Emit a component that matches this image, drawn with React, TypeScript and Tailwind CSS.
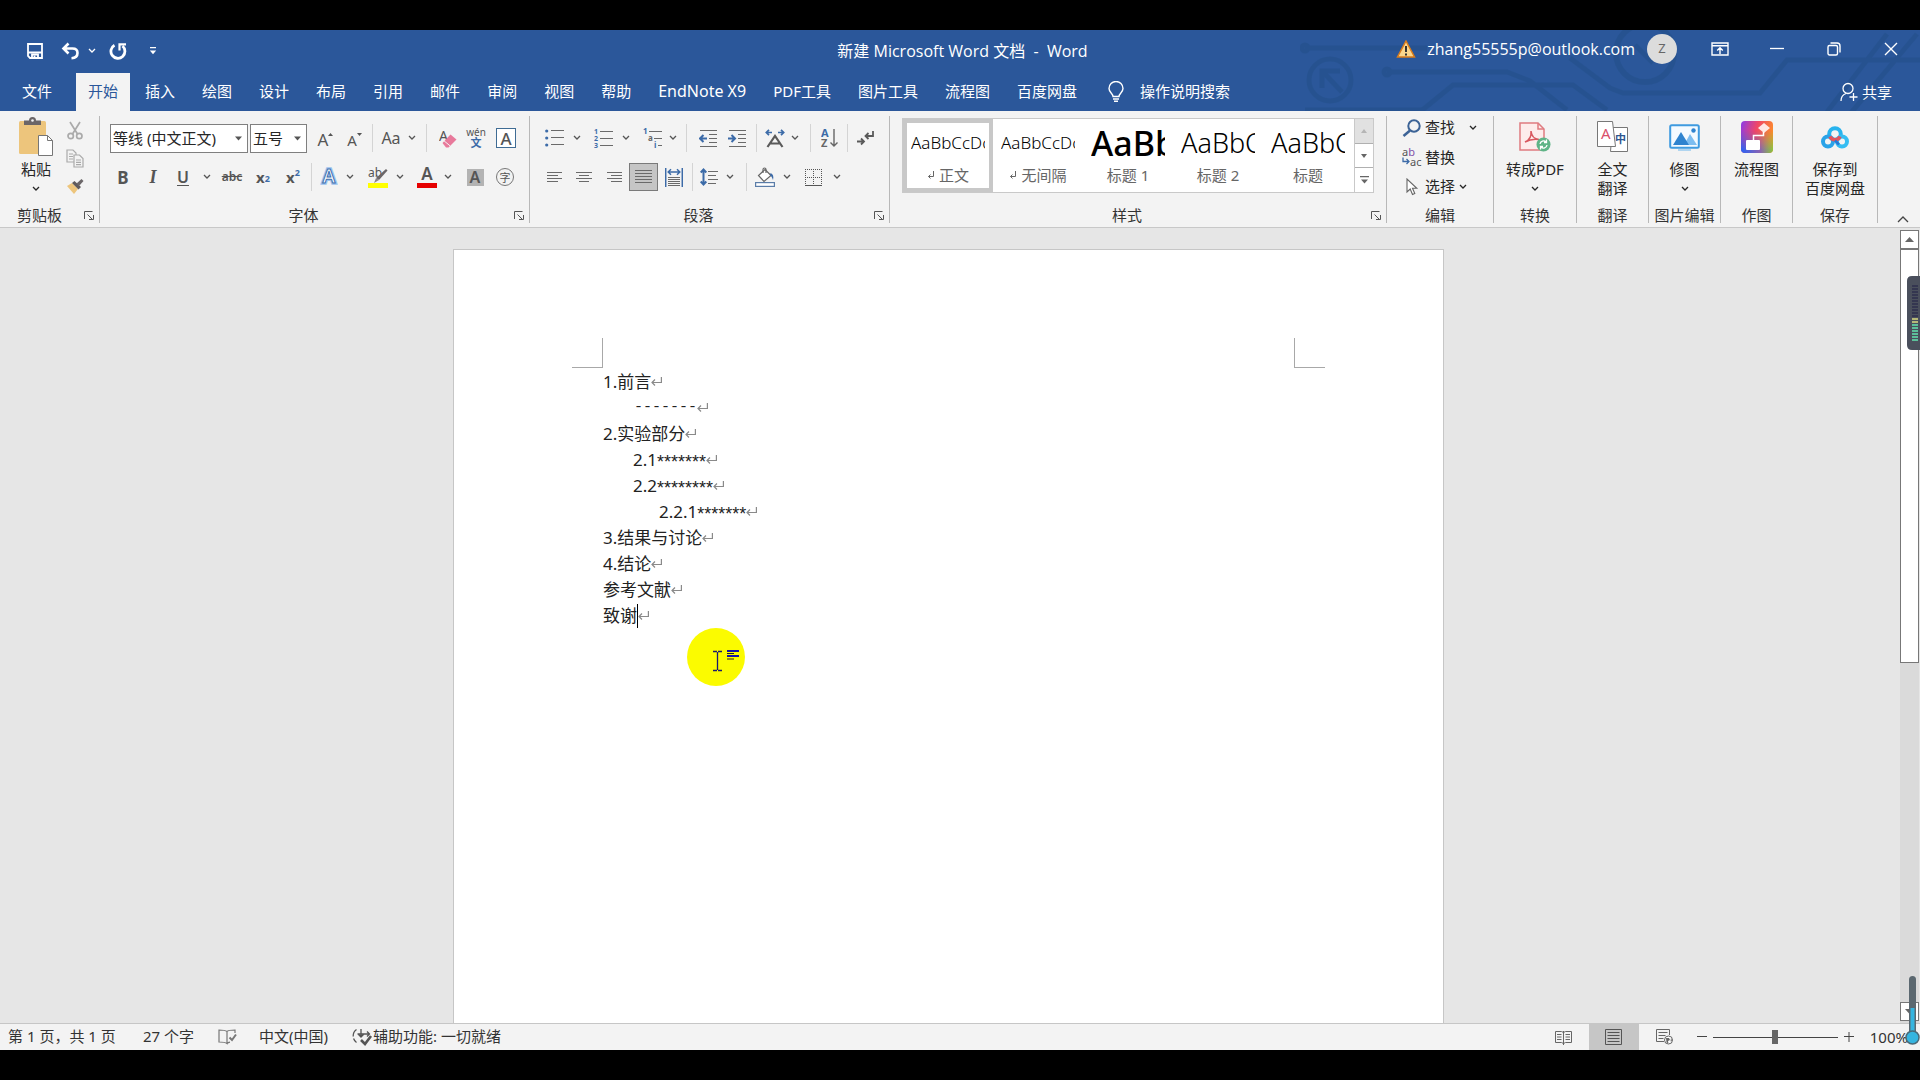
import type { ReactNode } from "react";
import clsx from "clsx";

interface BoxProps {
  children?: ReactNode;
  className?: string;
}

interface ToolProps extends BoxProps {
  label: string;
}

const tabs = ["插入", "绘图", "设计", "布局", "引用", "邮件", "审阅", "视图", "帮助", "EndNote X9", "PDF工具", "图片工具", "流程图", "百度网盘"];

const styles = [
  { name: "正文", sample: "AaBbCcDc", mark: true, size: "text-[17px] font-light" },
  { name: "无间隔", sample: "AaBbCcDc", mark: true, size: "text-[17px] font-light" },
  { name: "标题 1", sample: "AaBb", mark: false, size: "text-[34px] font-medium" },
  { name: "标题 2", sample: "AaBbC", mark: false, size: "text-[27px] font-light" },
  { name: "标题", sample: "AaBbC", mark: false, size: "text-[27px] font-light" },
];

const lines = [
  { text: "1.前言", indent: "" },
  { text: "", dashes: "-------", indent: "pl-[31px]" },
  { text: "2.实验部分", indent: "" },
  { text: "2.1", stars: "*******", indent: "pl-[30px]" },
  { text: "2.2", stars: "********", indent: "pl-[30px]" },
  { text: "2.2.1", stars: "*******", indent: "pl-14" },
  { text: "3.结果与讨论", indent: "" },
  { text: "4.结论", indent: "" },
  { text: "参考文献", indent: "" },
  { text: "致谢", indent: "", caret: true },
];

const Chevron = () => (
  <svg width="8" height="6" viewBox="0 0 8 6" fill="none" stroke="currentColor" strokeWidth="1.3">
    <path d="M1 1l3 3 3-3" />
  </svg>
);

const Tool = ({ label, children, className }: ToolProps) => (
  <button type="button" aria-label={label} className={clsx("flex h-7 shrink-0 items-center justify-center leading-none", className)}>
    {children}
  </button>
);

const Drop = ({ className }: { className: string }) => (
  <Tool label="更多选项" className={className}><Chevron /></Tool>
);

const Sep = ({ className }: { className: string }) => (
  <span className={clsx("flex h-7 shrink-0 justify-center", className)}><i className="w-px bg-[#d4d4d4]" /></span>
);

const Row = ({ children, className }: BoxProps) => (
  <div className={clsx("flex items-center", className)}>{children}</div>
);

const Launcher = () => (
  <button type="button" aria-label="对话框启动器" className="absolute right-1 bottom-0.5">
    <svg width="11" height="11" viewBox="0 0 11 11" fill="none" stroke="#555" strokeWidth="1">
      <path d="M.5 9V1.500h8M3.500 4.500l5 5M9.500 5v4.500H5" />
    </svg>
  </button>
);

const Group = ({ title, children, className, launcher }: BoxProps & { title: string; launcher?: boolean }) => (
  <section className={clsx("relative flex h-[107px] shrink-0 flex-col justify-between border-r border-[#b8b8b8]", className)}>
    <div>{children}</div>
    <h2 className="text-center text-[15px] leading-4 text-[#333]">{title}</h2>
    {launcher && <Launcher />}
  </section>
);

interface BigProps {
  icon: ReactNode;
  first: string;
  second?: string;
}

const BigButton = ({ icon, first, second }: BigProps) => (
  <button type="button" className="flex w-full flex-col items-center text-[15px] leading-[19px] whitespace-nowrap text-[#262626]">
    <span className="flex h-11 items-center justify-center pb-0.5">{icon}</span>
    <span>{first}</span>
    <span className="flex h-[19px] items-center">{second === "v" ? <Chevron /> : second}</span>
  </button>
);

const Circuit = () => (
  <svg className="absolute top-0 right-0" width="620" height="81" viewBox="0 0 620 81" fill="none" stroke="#234f88" strokeWidth="5" opacity="0.5">
    <path d="M5 18h122M87 42h120l23 9 37 29M120 82l33-27h120l34 25M270 28l40 30 13 5h137l27-33h133M587 4l-60 78M617 4l-67 80" />
    <circle cx="5" cy="18" r="3" />
    <circle cx="87" cy="42" r="3" />
    <circle cx="30" cy="50" r="21" />
    <circle cx="345" cy="23" r="29" strokeWidth="6" />
    <path d="M42 62L23 42M22 58V41h18" />
    <path d="M5 80h120M335 15l18 18" />
  </svg>
);

const TitleBar = () => (
  <div className="relative flex h-[43px] items-center pb-0.5 text-white">
    <div className="flex flex-1 items-center pl-[27px]">
      <button type="button" aria-label="保存">
        <svg width="16" height="16" viewBox="0 0 16 16" fill="none" stroke="currentColor" strokeWidth="1.800">
          <path d="M1 1h14v14H3l-2-2zM1 9.500h14" />
          <path d="M5 15v-3.500h6V15" />
          <path d="M7.500 12.500v2.500" />
        </svg>
      </button>
      <button type="button" aria-label="撤消" className="ml-[18px]">
        <svg width="19" height="18" viewBox="0 0 19 18" fill="none" stroke="currentColor" strokeWidth="2.600">
          <path d="M7.500 1.500L2.500 6.500l5 5M3 6.500h8.500c3 0 5 1.800 5 4.500 0 3-2.200 5-6 5.200" />
        </svg>
      </button>
      <button type="button" aria-label="撤消列表" className="ml-2"><Chevron /></button>
      <button type="button" aria-label="重复" className="ml-[13px]">
        <svg width="18" height="18" viewBox="0 0 18 18" fill="none" stroke="currentColor" strokeWidth="2.800">
          <path d="M5.500 3.200A7 7 0 1 0 13.500 4" />
          <path d="M10.500 8.500V2.300h6.500" strokeWidth="2.200" />
        </svg>
      </button>
      <button type="button" aria-label="自定义快速访问工具栏" className="ml-[22px]">
        <svg width="8" height="8" viewBox="0 0 8 8" fill="currentColor"><path d="M1 0h6v1.300H1zM.8 3.500h6.400L4 7.200z" /></svg>
      </button>
    </div>
    <h1 className="font-['Open_Sans','Noto_Sans_CJK_SC',sans-serif] text-[16px] whitespace-pre">新建 Microsoft Word 文档  -  Word</h1>
    <div className="flex flex-1 items-center justify-end pr-[22px] pb-1">
      <svg width="20" height="18" viewBox="0 0 20 18">
        <path d="M10 1l8.500 16h-17z" fill="#fbd68c" stroke="#d97c1c" strokeWidth="1.500" />
        <path d="M10 6v6M10 13.500v2" stroke="#333" strokeWidth="2" />
      </svg>
      <span className="ml-[11px] font-['Open_Sans',sans-serif] text-[16px]">zhang55555p@outlook.com</span>
      <span className="ml-3 flex h-[30px] w-[30px] items-center justify-center rounded-full bg-[#dcdcdc] text-[13px] text-[#666]">Z</span>
      <button type="button" aria-label="功能区显示选项" className="ml-[34px]">
        <svg width="18" height="14" viewBox="0 0 18 14" fill="none" stroke="currentColor" strokeWidth="1.400">
          <path d="M1 1h16v12H1zM1 3.700h16M9 12V6M6.200 8.500L9 5.700l2.800 2.800" />
        </svg>
      </button>
      <button type="button" aria-label="最小化" className="ml-[41px]">
        <svg width="14" height="14" viewBox="0 0 14 14" stroke="currentColor" strokeWidth="1.300"><path d="M0 6.500h14" /></svg>
      </button>
      <button type="button" aria-label="还原" className="ml-[43px]">
        <svg width="14" height="14" viewBox="0 0 14 14" fill="none" stroke="currentColor" strokeWidth="1.400">
          <rect x="1" y="3.500" width="9.500" height="9.500" rx="1.500" />
          <path d="M3.500 1h6.500q3 0 3 3v6.500" />
        </svg>
      </button>
      <button type="button" aria-label="关闭" className="ml-[43px]">
        <svg width="14" height="14" viewBox="0 0 14 14" stroke="currentColor" strokeWidth="1.400"><path d="M1 1l12 12M13 1L1 13" /></svg>
      </button>
    </div>
  </div>
);

const TabBar = () => (
  <nav className="relative flex h-[38px] items-stretch gap-[3px] text-[15px] whitespace-nowrap text-white">
    <button type="button" className="ml-2.5 px-3 pb-0.5">文件</button>
    <button type="button" className="ml-[9px] bg-[#f3f3f3] px-3 pb-0.5 text-[#2b579a]">开始</button>
    {tabs.map((tab) => (
      <button type="button" key={tab} className={clsx("px-3 pb-0.5", tab === "EndNote X9" && "text-[16px]")}>{tab}</button>
    ))}
    <button type="button" className="ml-4 flex items-center gap-4 pb-0.5">
      <svg width="16" height="21" viewBox="0 0 16 21" fill="none" stroke="currentColor" strokeWidth="1.400">
        <path d="M5 15.500c0-3-4-4.300-4-8a7 7 0 0 1 14 0c0 3.700-4 5-4 8zM5 18h6M6 20.200h4" />
      </svg>
      操作说明搜索
    </button>
    <button type="button" className="mr-7 ml-auto flex items-center gap-1">
      <svg width="18" height="20" viewBox="0 0 18 20" fill="none" stroke="currentColor" strokeWidth="1.300">
        <circle cx="8" cy="6.500" r="5" />
        <path d="M1 19c0-4 2-6.500 5-7.500M13.500 11v8M9.500 15h8" />
      </svg>
      共享
    </button>
  </nav>
);

const Clipboard = () => (
  <Group title="剪贴板" launcher className="w-[100px] [&>h2]:pr-5">
    <div className="flex pl-4">
      <div className="w-10">
        <BigButton
          first="粘贴"
          second="v"
          icon={
            <svg width="36" height="40" viewBox="0 0 36 40">
              <rect x="1" y="4" width="27" height="33" rx="1.500" fill="#edc57c" />
              <path d="M6 8V3.500h5a3.500 3.500 0 0 1 7 0h5V8z" fill="#6b6668" />
              <circle cx="14.500" cy="3.500" r="1.300" fill="#f3f3f3" />
              <path d="M20.500 18.500h9l5 5v15h-14z" fill="#fff" stroke="#767676" />
              <path d="M29.500 18.500v5h5" fill="none" stroke="#767676" />
            </svg>
          }
        />
      </div>
      <div className="flex w-[37px] flex-col items-center">
        <Tool label="剪切">
          <svg width="16" height="19" viewBox="0 0 16 19" fill="none" stroke="#aaa" strokeWidth="1.700">
            <path d="M3 1l7.500 12M13 1L5.500 13" />
            <circle cx="3.700" cy="15" r="2.700" />
            <circle cx="12.300" cy="15" r="2.700" />
          </svg>
        </Tool>
        <Tool label="复制">
          <svg width="18" height="19" viewBox="0 0 18 19" fill="#f3f3f3" stroke="#aaa" strokeWidth="1.200">
            <path d="M1 1h6l3 3v9H1zM3 5h4M3 7.500h4M3 10h4" />
            <path d="M8 6h5.500L17 9.500V18H8zM10 11h5M10 13.300h5M10 15.600h5" />
          </svg>
        </Tool>
        <Tool label="格式刷">
          <svg width="18" height="16" viewBox="0 0 18 16">
            <path d="M1 8l5-3 6 6-4 5z" fill="#edc57c" />
            <path d="M6 5l2.500-2 6.500 6-2.500 2.500z" fill="#5f5a5c" />
            <path d="M10.500 5.500L15.500 1l2 2-4.500 5z" fill="#6b6668" />
          </svg>
        </Tool>
      </div>
    </div>
  </Group>
);

const Combo = ({ label, value, className }: { label: string; value: string; className: string }) => (
  <span className={clsx("relative flex h-[29px] shrink-0", className)}>
    <select aria-label={label} className="w-full appearance-none border border-[#7f7f7f] bg-white pl-0.5 text-[15px] text-[#262626]">
      <option>{value}</option>
    </select>
    <svg className="pointer-events-none absolute top-3 right-1.5" width="7" height="5" viewBox="0 0 7 5" fill="#555"><path d="M0 .5h7L3.500 4.500z" /></svg>
  </span>
);

const FontGroup = () => (
  <Group title="字体" launcher className="w-[430px] [&>h2]:pr-[22px]">
    <Row className="h-11 pl-2.5">
      <Combo label="字体" value="等线 (中文正文)" className="w-[138px]" />
      <Combo label="字号" value="五号" className="ml-0.5 w-[57px]" />
      <Tool label="增大字号" className="ml-1 w-[29px] items-end pb-1 text-[17px]">
        A<svg className="mb-3" width="5" height="3" viewBox="0 0 5 3" fill="currentColor"><path d="M0 3h5L2.500 0z" /></svg>
      </Tool>
      <Tool label="减小字号" className="w-[29px] items-end pb-1 text-[15px]">
        A<svg className="mb-3" width="5" height="3" viewBox="0 0 5 3" fill="currentColor"><path d="M0 0h5L2.500 3z" /></svg>
      </Tool>
      <Sep className="w-1.5" />
      <Tool label="更改大小写" className="w-8 text-[16px]">Aa</Tool>
      <Drop className="w-2.5" />
      <Sep className="w-[18px]" />
      <Tool label="清除所有格式" className="w-[26px]">
        <svg width="18" height="19" viewBox="0 0 18 19">
          <text x="0" y="12" fontSize="14" fill="#555">A</text>
          <path d="M3.500 14L11.500 5.500l6 5-8 8h-2.500z" fill="#e8799b" />
          <path d="M5 11.800l6 5" stroke="#f3f3f3" />
        </svg>
      </Tool>
      <Tool label="拼音指南" className="w-[30px] flex-col">
        <span className="text-[10px] leading-[10px]">wén</span>
        <span className="text-[11px] leading-[12px] font-bold text-[#3c6ba8]">文</span>
      </Tool>
      <Tool label="字符边框" className="w-[30px]">
        <span className="flex h-5 w-5 items-center justify-center border border-[#3f6c94] bg-white text-[17px] font-medium">A</span>
      </Tool>
    </Row>
    <Row className="h-[34px] pl-2">
      <Tool label="加粗" className="w-[30px] text-[17px] font-bold">B</Tool>
      <Tool label="倾斜" className="w-[30px] font-['Liberation_Serif',serif] text-[18px] font-bold italic">I</Tool>
      <Tool label="下划线" className="w-[30px] text-[16px] font-semibold underline underline-offset-2">U</Tool>
      <Drop className="w-[18px]" />
      <Tool label="删除线" className="w-8 text-[12px] font-semibold line-through">abc</Tool>
      <Tool label="下标" className="w-[30px] text-[15px] font-bold">x<sub className="text-[9px] text-[#3c6ba8]">2</sub></Tool>
      <Tool label="上标" className="w-[30px] text-[15px] font-bold">x<sup className="text-[9px] text-[#3c6ba8]">2</sup></Tool>
      <Sep className="w-1.5" />
      <Tool label="文本效果" className="w-[30px]">
        <svg width="18" height="20" viewBox="0 0 18 20">
          <text x="9" y="16" textAnchor="middle" fontSize="19" fontWeight="600" fill="#fff" stroke="#9dc3ee" strokeWidth="3.500">A</text>
          <text x="9" y="16" textAnchor="middle" fontSize="19" fontWeight="600" fill="#fff" stroke="#3f6fae" strokeWidth="1">A</text>
        </svg>
      </Tool>
      <Drop className="w-3" />
      <Tool label="突出显示" className="ml-1.5 w-8">
        <svg width="20" height="21" viewBox="0 0 20 21">
          <text x="0" y="10" fontSize="12" fill="#555">ab</text>
          <path d="M18 2l1.500 1.500L11 13l-3-2z" fill="#6b6668" />
          <path d="M8 11l3 2-5 3z" fill="#8a8587" />
          <rect y="16" width="20" height="5" fill="#ff0" />
        </svg>
      </Tool>
      <Drop className="w-3" />
      <Tool label="字体颜色" className="ml-1.5 w-[30px]">
        <svg width="20" height="21" viewBox="0 0 20 21">
          <text x="10" y="13" textAnchor="middle" fontSize="17" fontWeight="600" fill="#555">A</text>
          <rect y="16" width="20" height="5" fill="#e60000" />
        </svg>
      </Tool>
      <Drop className="w-3" />
      <Tool label="字符底纹" className="ml-1.5 w-[30px]">
        <span className="flex h-[17px] w-[17px] items-center justify-center bg-[#b3b3b3] text-[16px] font-semibold">A</span>
      </Tool>
      <Tool label="带圈字符" className="w-[30px]">
        <span className="flex h-[18px] w-[18px] items-center justify-center rounded-full border border-[#777] text-[11px]">字</span>
      </Tool>
    </Row>
  </Group>
);

// horizontal rules given as [x, y, width] triples
const Rules = ({ rules }: { rules: number[][] }) => (
  <g fill="#6a6a6a" stroke="none">
    {rules.map(([x, y, w]) => <rect key={y} x={x} y={y} width={w} height="1" />)}
  </g>
);

const ParagraphGroup = () => (
  <Group title="段落" launcher className="w-[360px] [&>h2]:pr-[22px]">
    <Row className="h-11 pl-[9px]">
      <Tool label="项目符号" className="w-[30px]">
        <svg width="19" height="18" viewBox="0 0 19 18" fill="#3c6ba8">
          <circle cx="1.700" cy="2" r="1.600" /><circle cx="1.700" cy="9" r="1.600" /><circle cx="1.700" cy="16" r="1.600" />
          <Rules rules={[[6, 1, 13], [6, 8, 13], [6, 15, 13]]} />
        </svg>
      </Tool>
      <Drop className="w-4" />
      <Tool label="编号" className="ml-[3px] w-[30px]">
        <svg width="19" height="20" viewBox="0 0 19 20" fontSize="7" fontWeight="700" fill="#3c6ba8">
          <text x="0" y="6">1</text><text x="0" y="13">2</text><text x="0" y="20">3</text>
          <Rules rules={[[6, 3, 13], [6, 10, 13], [6, 17, 13]]} />
        </svg>
      </Tool>
      <Drop className="w-4" />
      <Tool label="多级列表" className="ml-[3px] w-[30px]">
        <svg width="19" height="20" viewBox="0 0 19 20" fontSize="8" fontWeight="700" fill="#3c6ba8">
          <text x="0" y="6">1</text><text x="5" y="13" fill="#666">a</text><text x="11" y="20">i</text>
          <Rules rules={[[6, 3, 13], [11, 10, 8], [15, 17, 4]]} />
        </svg>
      </Tool>
      <Drop className="w-3" />
      <Sep className="w-3.5" />
      <Tool label="减少缩进量" className="w-[29px]">
        <svg width="18" height="17" viewBox="0 0 18 17" fill="none" stroke="#3c6ba8" strokeWidth="2">
          <path d="M8 8.500H1.500M4.500 5L1 8.500 4.500 12" />
          <Rules rules={[[1, 0, 17], [10, 4, 8], [10, 8, 8], [10, 12, 8], [1, 16, 17]]} />
        </svg>
      </Tool>
      <Tool label="增加缩进量" className="w-[30px]">
        <svg width="18" height="17" viewBox="0 0 18 17" fill="none" stroke="#3c6ba8" strokeWidth="2">
          <path d="M0 8.500h6.500M3.500 5L7 8.500 3.500 12" />
          <Rules rules={[[1, 0, 17], [10, 4, 8], [10, 8, 8], [10, 12, 8], [1, 16, 17]]} />
        </svg>
      </Tool>
      <Sep className="w-2" />
      <Tool label="中文版式" className="w-[30px]">
        <svg width="20" height="19" viewBox="0 0 20 19" fill="none" stroke="#3c6ba8" strokeWidth="1.700">
          <path d="M7 3.500H1.500M4 .8L1.300 3.500 4 6.200M13 3.500h5.500M16 .8l2.700 2.700L16 6.200" />
          <path d="M2.500 18L10 7l7.500 11M5.500 14.500h9" stroke="#5a5a5a" strokeWidth="2.200" />
        </svg>
      </Tool>
      <Drop className="w-2.5" />
      <Sep className="w-5" />
      <Tool label="排序" className="w-5">
        <svg width="18" height="20" viewBox="0 0 18 20" fontSize="11" fontWeight="700" fill="none">
          <text x="0" y="9" fill="#3c6ba8">A</text><text x="0" y="19" fill="#666">Z</text>
          <path d="M13 1v17M9.500 14.500L13 18l3.500-3.500" stroke="#666" strokeWidth="1.400" />
        </svg>
      </Tool>
      <Sep className="w-3.5" />
      <Tool label="显示编辑标记" className="w-[22px]">
        <svg width="17" height="16" viewBox="0 0 17 16" fill="none" stroke="#5a5a5a" strokeWidth="1.800">
          <path d="M16 1v5H9M11.500 3L8.500 6l3 3M0 11.500h7M4 8.500l3 3-3 3" />
        </svg>
      </Tool>
    </Row>
    <Row className="h-[34px] pl-[9px]">
      <Tool label="左对齐" className="w-[30px]">
        <svg width="15" height="13" viewBox="0 0 15 13"><Rules rules={[[0, 1, 15], [0, 4, 11], [0, 7, 15], [0, 10, 11]]} /></svg>
      </Tool>
      <Tool label="居中" className="w-[30px]">
        <svg width="16" height="13" viewBox="0 0 16 13"><Rules rules={[[0, 1, 16], [3, 4, 10], [0, 7, 16], [3, 10, 10]]} /></svg>
      </Tool>
      <Tool label="右对齐" className="w-[30px]">
        <svg width="15" height="13" viewBox="0 0 15 13"><Rules rules={[[0, 1, 15], [4, 4, 11], [0, 7, 15], [4, 10, 11]]} /></svg>
      </Tool>
      <Tool label="两端对齐" className="w-[29px] border border-[#7a7a7a] bg-[#c5c5c5]">
        <svg width="17" height="14" viewBox="0 0 17 14"><Rules rules={[[0, 0, 17], [0, 3, 17], [0, 6, 17], [0, 9, 17], [0, 12, 17]]} /></svg>
      </Tool>
      <Tool label="分散对齐" className="w-[31px]">
        <svg width="18" height="19" viewBox="0 0 18 19" fill="none" stroke="#3c6ba8" strokeWidth="1.500">
          <path d="M.7 0v19M17.300 0v19M3 4h12M6 1.200L3.200 4 6 6.800M12 1.200L14.800 4 12 6.800" />
          <Rules rules={[[3, 9, 12], [3, 11, 12], [3, 13, 12], [3, 15, 12], [3, 17, 12]]} />
        </svg>
      </Tool>
      <Sep className="w-1.5" />
      <Tool label="行和段落间距" className="w-[28px]">
        <svg width="18" height="18" viewBox="0 0 18 18" fill="none" stroke="#3c6ba8" strokeWidth="2">
          <path d="M3.500 2v14M.7 4.500l2.800-3 2.800 3M.7 13.500l2.800 3 2.800-3" />
          <Rules rules={[[8, 3, 10], [8, 7, 8], [8, 11, 10], [8, 15, 8]]} />
        </svg>
      </Tool>
      <Drop className="w-3.5" />
      <Sep className="w-[18px]" />
      <Tool label="底纹" className="w-5">
        <svg width="20" height="20" viewBox="0 0 20 20" fill="none" stroke="#666" strokeWidth="1.200">
          <path d="M10 2.500l6 6-7 6-5.500-6z" fill="#fff" />
          <path d="M8 6V2.500a1.500 1.500 0 0 1 3 0V6" />
          <path d="M15.500 6c2.500 1 3.500 3.500 2.500 7-1-2.500-1.500-4-3-4.500z" fill="#3c6ba8" stroke="none" />
          <rect x=".6" y="15.600" width="18.800" height="3.800" fill="#fff" stroke="#5b7da8" />
        </svg>
      </Tool>
      <Drop className="w-6" />
      <Tool label="边框" className="w-[28px]">
        <svg width="17" height="17" viewBox="0 0 17 17" fill="none" stroke="#555" strokeDasharray="1 1">
          <path d="M0 .5h17M0 8.500h17M.5 0v16M8.500 0v16M16.500 0v16" />
          <path d="M0 16.500h17" strokeDasharray="none" />
        </svg>
      </Tool>
      <Drop className="w-5" />
    </Row>
  </Group>
);

const StylesGroup = () => (
  <Group title="样式" launcher className="w-[497px] [&>h2]:pr-[22px]">
    <div className="mt-0.5 ml-[12px] flex h-[75px] w-[472px] border border-[#c9c9c9] bg-white">
      {styles.map((style, i) => (
        <button
          type="button"
          key={style.name}
          className={clsx("flex w-[90px] shrink-0 flex-col items-center", i === 0 && "outline-4 -outline-offset-4 outline-[#c8c8c8] ring-1 ring-[#8a8a8a] ring-inset")}
        >
          <span className={clsx("flex h-[47px] w-[74px] items-center overflow-hidden leading-none whitespace-nowrap text-black", style.size)}>{style.sample}</span>
          <span className="flex items-center gap-1 text-[15px] leading-[18px] text-[#666]">
            {style.mark && (
              <svg width="8" height="8" viewBox="0 0 8 8" fill="none" stroke="#666"><path d="M6.500 0v5.500h-5M3.500 3.500l-2 2 2 2" /></svg>
            )}
            {style.name}
          </span>
        </button>
      ))}
      <div className="ml-auto flex w-[19px] flex-col border-l border-[#c9c9c9]">
        <button type="button" aria-label="上一行" className="flex flex-1 items-center justify-center bg-[#e1e1e1]">
          <svg width="6" height="4" viewBox="0 0 6 4" fill="#b5b5b5"><path d="M0 4h6L3 0z" /></svg>
        </button>
        <button type="button" aria-label="下一行" className="flex flex-1 items-center justify-center border-y border-[#b0b0b0]">
          <svg width="6" height="4" viewBox="0 0 6 4" fill="#666"><path d="M0 0h6L3 4z" /></svg>
        </button>
        <button type="button" aria-label="其他" className="flex flex-1 items-center justify-center">
          <svg width="9" height="8" viewBox="0 0 9 8" fill="#666"><path d="M0 0h9v1.300H0zM1 3.500h7l-3.500 4z" /></svg>
        </button>
      </div>
    </div>
  </Group>
);

const EditGroup = () => (
  <Group title="编辑" className="w-[107px]">
    <div className="flex flex-col pl-[15px] text-[15px] text-[#262626]">
      <button type="button" className="flex h-[29px] items-center pb-1.5">
        <svg width="19" height="18" viewBox="0 0 19 18" fill="none" stroke="#3c6396" strokeWidth="2">
          <circle cx="12" cy="7" r="5.700" />
          <path d="M8 11.500L1.500 17" strokeWidth="2.500" />
        </svg>
        <span className="mr-3.5 ml-1">查找</span>
        <Chevron />
      </button>
      <button type="button" className="flex h-[29px] items-center pb-1">
        <svg width="20" height="19" viewBox="0 0 20 19" fontSize="11" fill="#555">
          <text x="0" y="8">a<tspan fill="#8050a8">b</tspan></text>
          <text x="8" y="18">ac</text>
          <path d="M1 9.500v4h6M4.500 11l2.500 2.500L4.500 16" fill="none" stroke="#3c6ba8" strokeWidth="1.300" />
        </svg>
        <span className="ml-[3px]">替换</span>
      </button>
      <button type="button" className="flex h-[29px] items-center pb-1">
        <svg width="19" height="18" viewBox="0 0 19 18" fill="#fff" stroke="#666" strokeWidth="1.100">
          <path d="M5 1v13l3.200-3 2.300 5.500 2.300-1L10.500 10.300h4.300z" />
        </svg>
        <span className="mr-1 ml-1">选择</span>
        <Chevron />
      </button>
    </div>
  </Group>
);

const AddinGroups = () => (
  <>
    <Group title="转换" className="w-[83px]">
      <BigButton
        first="转成PDF"
        second="v"
        icon={
          <svg width="32" height="30" viewBox="0 0 32 30" fill="none">
            <path d="M1 1h18l6 6v21H1z" fill="#fdeceb" stroke="#df7b80" strokeWidth="1.500" />
            <path d="M19 1v6h6" stroke="#df7b80" strokeWidth="1.500" />
            <path d="M6 20c5-2 6.500-6 6-11 .5 5 3 8 8 8.500-6-.8-9.500 0-14 2.500z" stroke="#d8585f" strokeWidth="1.500" />
            <circle cx="24.500" cy="22.500" r="7" fill="#5fb487" />
            <path d="M21 22a3.500 3.500 0 0 1 6-2M28 23a3.500 3.500 0 0 1-6 2M27.500 17.500V20.500H25M21.500 27.500V24.500H24" stroke="#fff" strokeWidth="1.300" />
          </svg>
        }
      />
    </Group>
    <Group title="翻译" className="w-[72px]">
      <BigButton
        first="全文"
        second="翻译"
        icon={
          <svg width="32" height="32" viewBox="0 0 32 32" fill="#fff" stroke="#777">
            <path d="M15.500 6.500h15v24h-17z" />
            <path d="M.5.500h15l3 25H.5z" />
            <text x="4" y="18" fontSize="15" fill="#d9506a" stroke="none">A</text>
            <text x="18" y="22" fontSize="11" fontWeight="700" fill="#2f568f" stroke="none">中</text>
          </svg>
        }
      />
    </Group>
    <Group title="图片编辑" className="w-[72px]">
      <BigButton
        first="修图"
        second="v"
        icon={
          <svg width="32" height="27" viewBox="0 0 32 27">
            <rect x="1.200" y="1.200" width="28.600" height="22.600" rx="1.500" fill="#f4faff" stroke="#3f9be0" strokeWidth="2" />
            <path d="M15 21l6-11 7 11z" fill="#7dbdf0" />
            <path d="M4 21l8-13 8 13z" fill="#2f83cf" />
            <circle cx="24.500" cy="6.500" r="2.200" fill="#2f83cf" />
            <path d="M9 26h13" stroke="#8cc4ee" strokeWidth="1.300" />
          </svg>
        }
      />
    </Group>
    <Group title="作图" className="w-[72px]">
      <BigButton
        first="流程图"
        icon={
          <svg width="32" height="32" viewBox="0 0 32 32">
            <defs>
              <linearGradient id="flowWarm" x1="0" y1="0" x2="1" y2="0.3">
                <stop offset="0" stopColor="#8a3bea" />
                <stop offset="0.500" stopColor="#f04668" />
                <stop offset="1" stopColor="#fb8b2c" />
              </linearGradient>
              <linearGradient id="flowCool" x1="0" y1="0" x2="1" y2="0">
                <stop offset="0" stopColor="#2b62f5" />
                <stop offset="0.600" stopColor="#8a63b0" />
                <stop offset="1" stopColor="#8cc63a" />
              </linearGradient>
              <linearGradient id="flowFade" x1="0" y1="0" x2="0" y2="1">
                <stop offset="0.300" stopColor="#000" />
                <stop offset="0.900" stopColor="#fff" />
              </linearGradient>
              <mask id="flowMask"><rect width="32" height="32" fill="url(#flowFade)" /></mask>
            </defs>
            <rect width="32" height="32" rx="4" fill="url(#flowWarm)" />
            <rect width="32" height="32" rx="4" fill="url(#flowCool)" mask="url(#flowMask)" />
            <path d="M23 2l6 5-6 5-6-5z" fill="#fff" fillOpacity="0.850" />
            <path d="M22.500 11v3.500H12.500V19" fill="none" stroke="#fff" strokeWidth="1.500" />
            <rect x="5" y="19" width="14" height="10" rx="1" fill="#fff" />
          </svg>
        }
      />
    </Group>
    <Group title="保存" className="w-[85px]">
      <BigButton
        first="保存到"
        second="百度网盘"
        icon={
          <svg width="28" height="23" viewBox="0 0 28 23" fill="none" strokeWidth="4">
            <circle cx="14" cy="8" r="5.800" stroke="#27b3ee" />
            <circle cx="7" cy="15.500" r="5" stroke="#2aa3e8" />
            <circle cx="21" cy="15.500" r="5" stroke="#35bdf2" />
            <path d="M9 10.500a5.500 5.500 0 0 0 10 0" stroke="#e2535c" strokeWidth="3.500" />
            <path d="M14 14.500l4 4" stroke="#2478d8" strokeWidth="2.500" />
          </svg>
        }
      />
    </Group>
  </>
);

const Ribbon = () => (
  <div className="flex min-h-[117px] border-b border-[#c8c8c8] bg-[#f3f3f3] pt-[5px] text-[#555]">
    <Clipboard />
    <FontGroup />
    <ParagraphGroup />
    <StylesGroup />
    <EditGroup />
    <AddinGroups />
    <button type="button" aria-label="折叠功能区" className="ml-auto self-end pr-[11px] pb-1">
      <svg width="12" height="7" viewBox="0 0 12 7" fill="none" stroke="#444" strokeWidth="1.300"><path d="M1 6l5-5 5 5" /></svg>
    </button>
  </div>
);

const ReturnMark = () => (
  <svg className="mb-0.5" width="11" height="9" viewBox="0 0 11 9" fill="none" stroke="#8a8a8a" strokeWidth="1.200"><path d="M10.400 0v5.500H1M4 2.500l-3 3 3 3" /></svg>
);

const Page = () => (
  <main className="w-[991px] border border-b-0 border-[#c6c6c6] bg-white pt-[88px]">
    <div className="flex justify-between px-[118px]">
      <i className="h-[30px] w-[31px] border-r border-b border-[#a8a8a8]" />
      <i className="h-[30px] w-[31px] border-b border-l border-[#a8a8a8]" />
    </div>
    <div className="px-[149px] pt-px text-[17px] leading-[26px] text-[#222]">
      {lines.map((line, i) => (
        <p key={i} className={clsx("flex h-[26px] items-center", line.indent)}>
          {line.text}
          {line.dashes && <span className="font-['Liberation_Mono',monospace] text-[15px]">{line.dashes}</span>}
          {line.stars && <span className="pt-1 font-['Liberation_Sans',sans-serif] text-[18px]">{line.stars}</span>}
          {line.caret && <i className="h-6 w-px bg-black" />}
          <ReturnMark />
        </p>
      ))}
    </div>
  </main>
);

// mouse highlight of the recorder with the click-and-type cursor
const Pointer = () => (
  <svg className="absolute top-[400px] left-[687px]" width="58" height="58" viewBox="0 0 58 58">
    <circle cx="29" cy="29" r="29" fill="#fbfb00" />
    <path d="M26 23.500h4m1 0h4M30.500 24v18M26 42.500h4m1 0h4" stroke="#1a1a6e" strokeWidth="1.300" />
    <path d="M40 23h12M40 28h12" stroke="#1313a8" strokeWidth="2" />
    <path d="M40 25.500h7M40 31h7" stroke="#222" />
  </svg>
);

const ScrollBar = () => (
  <div className="mt-0.5 mr-px flex w-[19px] shrink-0 flex-col bg-[#dadada]">
    <button type="button" aria-label="向上滚动" className="flex h-[19px] items-center justify-center border border-[#777] bg-white">
      <svg width="9" height="5" viewBox="0 0 9 5" fill="#666"><path d="M0 5h9L4.500 0z" /></svg>
    </button>
    <div className="h-[414px] border border-[#777] bg-white" />
    <button type="button" aria-label="向下滚动" className="mt-auto mb-0.5 flex h-[19px] items-center justify-center border border-[#777] bg-white">
      <svg width="9" height="5" viewBox="0 0 9 5" fill="#666"><path d="M0 0h9L4.500 5z" /></svg>
    </button>
  </div>
);

const ticks = Array.from({ length: 19 }, (_, i) => i);

const AudioMeter = () => (
  <svg className="absolute top-12 right-0" width="13" height="75" viewBox="0 0 13 75">
    <path d="M13 0H5Q0 0 0 5v64q0 5 5 5h8z" fill="#4a4f5c" />
    {ticks.map((i) => (
      <rect key={i} x="5" y={9 + i * 3} width="6" height="2" fill={i < 11 ? "#343650" : i < 13 ? "#b5b878" : "#5cc09a"} />
    ))}
  </svg>
);

const Thermometer = () => (
  <svg className="absolute right-0 -bottom-6" width="16" height="72" viewBox="0 0 16 72">
    <rect x="5" y="1" width="7" height="62" rx="3.500" fill="#5b6870" />
    <rect x="6.500" y="33" width="4" height="26" fill="#35b5e0" />
    <circle cx="8.500" cy="62.500" r="6.500" fill="#35b5e0" stroke="#4a6a78" strokeWidth="1.500" />
  </svg>
);

const StatusBar = () => (
  <footer className="flex h-[27px] items-center border-t border-[#c6c6c6] bg-[#f3f3f3] pl-2 text-[15px] leading-6 whitespace-nowrap text-[#333]">
    <span className="w-[135px] pb-0.5">第 1 页，共 1 页</span>
    <span className="w-[75px] pb-0.5">27 个字</span>
    <svg width="19" height="16" viewBox="0 0 19 16" fill="none" stroke="#777" strokeWidth="1.200">
      <path d="M9 2.500Q7 1 1 1v12q6 0 8 1.500zM9 14.500V2.500Q10 1 17 1v3M9 14.500q1-1 3-1.300" />
      <path d="M11.500 8.500l2.500 2.500 4-5.500" strokeWidth="2" />
    </svg>
    <span className="ml-[22px] w-[93px] pb-0.5">中文(中国)</span>
    <svg width="21" height="18" viewBox="0 0 21 18" fill="none" stroke="#555" strokeWidth="1.300">
      <path d="M4.500 1.500a8 8 0 0 0 0 13" strokeDasharray="8 2" />
      <path d="M9 1v8M5.500 6h12M15 3.500l2.500 2.500L15 8.500M6.500 6.500L9 9l2.500-2.500" />
      <path d="M9 12l4 4 6-8" strokeWidth="2.600" />
    </svg>
    <span className="pb-0.5">辅助功能: 一切就绪</span>
    <div className="ml-auto flex h-full items-center pr-3">
      <button type="button" aria-label="阅读视图" className="flex h-full w-[50px] items-center justify-center">
        <svg width="17" height="15" viewBox="0 0 17 15" fill="none" stroke="#666">
          <path d="M.5 1.500h6l2 1 2-1h6v11h-6l-2 1-2-1h-6zM8.500 1v14M2 4.500h4.500M2 7h4.500M2 9.500h4.500M10.500 4.500H15M10.500 7H15M10.500 9.500H15" />
        </svg>
      </button>
      <button type="button" aria-label="页面视图" className="flex h-full w-[50px] items-center justify-center bg-[#c6c6c6]">
        <svg width="17" height="16" viewBox="0 0 17 16" fill="none" stroke="#555">
          <path d="M.5.500h16v15H.5zM2.500 3.500h12M2.500 6.500h12M2.500 9.500h12M2.500 12.500h12" />
        </svg>
      </button>
      <button type="button" aria-label="Web 版式视图" className="flex h-full w-[52px] items-center justify-center">
        <svg width="17" height="16" viewBox="0 0 17 16" fill="none" stroke="#666">
          <path d="M8 12.500H.5v-12h13V6M2.500 3.500h9M2.500 6.500h7M2.500 9.500h5" />
          <circle cx="12.500" cy="11" r="4" fill="#fff" />
          <path d="M10 9l3 0 1 2-2 1 .5 2.500-2-1zM15 9l1 2.500-1.500 1z" fill="#666" stroke="none" />
        </svg>
      </button>
      <button type="button" aria-label="缩小" className="ml-1.5">
        <svg width="10" height="10" viewBox="0 0 10 10" stroke="#444"><path d="M0 4.500h10" /></svg>
      </button>
      <input
        type="range"
        aria-label="显示比例"
        min="0"
        max="200"
        defaultValue="100"
        className="mx-1.5 h-3.5 w-[125px] appearance-none bg-[linear-gradient(#444,#444)] bg-[length:100%_1px] bg-center bg-no-repeat [&::-webkit-slider-thumb]:h-3.5 [&::-webkit-slider-thumb]:w-1.5 [&::-webkit-slider-thumb]:appearance-none [&::-webkit-slider-thumb]:bg-[#666]"
      />
      <button type="button" aria-label="放大">
        <svg width="10" height="10" viewBox="0 0 10 10" stroke="#444"><path d="M0 4.500h10M5 0v10" /></svg>
      </button>
      <span className="ml-4">100%</span>
    </div>
  </footer>
);

const App = () => {
  return (
    <div className="flex min-h-screen flex-col bg-black py-[30px] font-['Noto_Sans','Noto_Sans_CJK_SC',sans-serif]">
      <header className="relative overflow-hidden bg-[#2b579a]">
        <Circuit />
        <TitleBar />
        <TabBar />
      </header>
      <Ribbon />
      <div className="relative flex flex-1 bg-[#e6e6e6]">
        <div className="relative flex flex-1 justify-center pt-[21px] pr-[3px]">
          <Page />
          <Pointer />
        </div>
        <ScrollBar />
        <AudioMeter />
        <div className="absolute right-0 bottom-0 z-10"><Thermometer /></div>
      </div>
      <StatusBar />
    </div>
  );
};

export default App;
